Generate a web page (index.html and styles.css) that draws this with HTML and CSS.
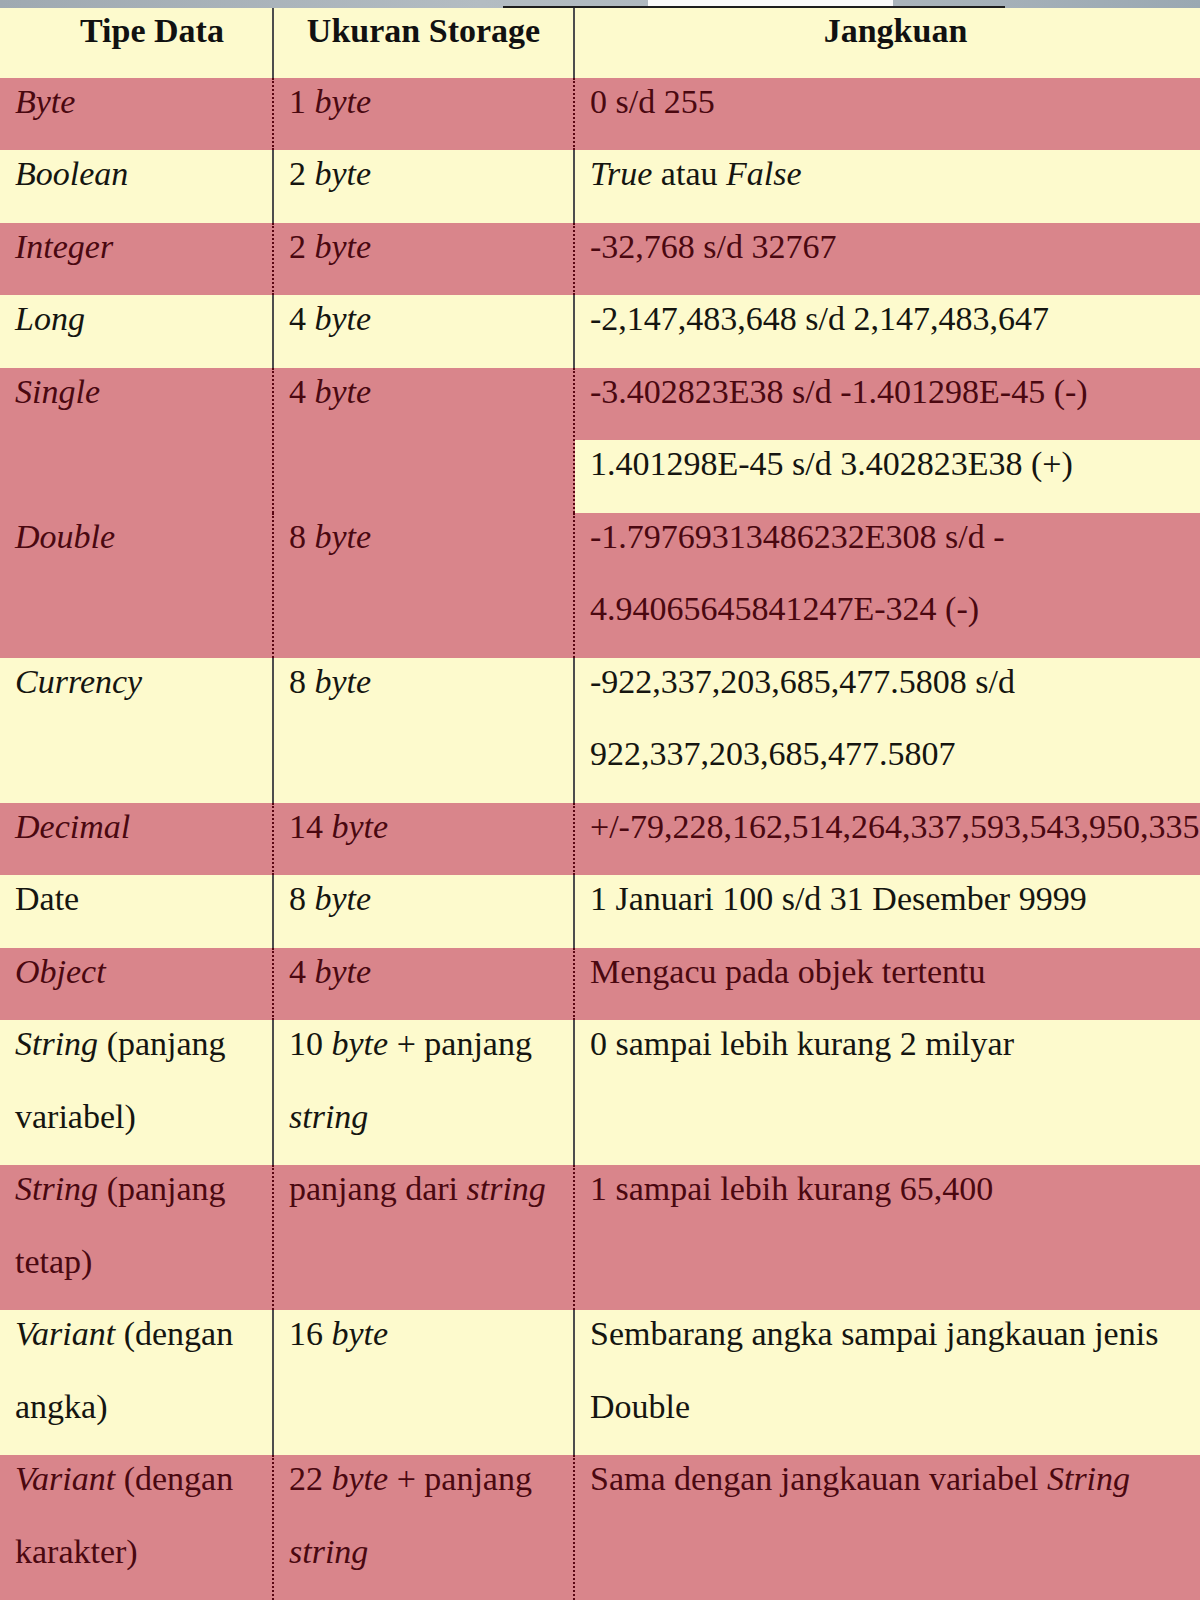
FILE: index.html
```html
<!DOCTYPE html>
<html lang="id">
<head>
<meta charset="utf-8">
<title>Tipe Data</title>
<link rel="stylesheet" href="styles.css">
</head>
<body>
<div class="strip">
  <div class="strip-bar"><div class="strip-box"></div></div>
</div>
<table class="dt">
  <colgroup>
    <col class="c1">
    <col class="c2">
    <col class="c3">
  </colgroup>
  <thead>
    <tr class="hd">
      <th class="h1"><div class="t">Tipe Data</div></th>
      <th class="h2"><div class="t">Ukuran Storage</div></th>
      <th class="h3"><div class="t">Jangkuan</div></th>
    </tr>
  </thead>
  <tbody>
    <tr class="p">
      <td><div class="t"><i>Byte</i></div></td>
      <td><div class="t">1 <i>byte</i></div></td>
      <td><div class="t">0 s/d 255</div></td>
    </tr>
    <tr class="y">
      <td><div class="t"><i>Boolean</i></div></td>
      <td><div class="t">2 <i>byte</i></div></td>
      <td><div class="t"><i>True</i> atau <i>False</i></div></td>
    </tr>
    <tr class="p">
      <td><div class="t"><i>Integer</i></div></td>
      <td><div class="t">2 <i>byte</i></div></td>
      <td><div class="t">-32,768 s/d 32767</div></td>
    </tr>
    <tr class="y">
      <td><div class="t"><i>Long</i></div></td>
      <td><div class="t">4 <i>byte</i></div></td>
      <td><div class="t">-2,147,483,648 s/d 2,147,483,647</div></td>
    </tr>
    <tr class="p">
      <td rowspan="2"><div class="t"><i>Single</i></div></td>
      <td rowspan="2"><div class="t">4 <i>byte</i></div></td>
      <td><div class="t">-3.402823E38 s/d -1.401298E-45 (-)</div></td>
    </tr>
    <tr class="y">
      <td><div class="t">1.401298E-45 s/d 3.402823E38 (+)</div></td>
    </tr>
    <tr class="p">
      <td><div class="t"><i>Double</i></div></td>
      <td><div class="t">8 <i>byte</i></div></td>
      <td><div class="t">-1.79769313486232E308 s/d -<br>4.94065645841247E-324 (-)</div></td>
    </tr>
    <tr class="y">
      <td><div class="t"><i>Currency</i></div></td>
      <td><div class="t">8 <i>byte</i></div></td>
      <td><div class="t">-922,337,203,685,477.5808 s/d<br>922,337,203,685,477.5807</div></td>
    </tr>
    <tr class="p">
      <td><div class="t"><i>Decimal</i></div></td>
      <td><div class="t">14 <i>byte</i></div></td>
      <td class="nw"><div class="t">+/-79,228,162,514,264,337,593,543,950,335</div></td>
    </tr>
    <tr class="y">
      <td><div class="t">Date</div></td>
      <td><div class="t">8 <i>byte</i></div></td>
      <td><div class="t">1 Januari 100 s/d 31 Desember 9999</div></td>
    </tr>
    <tr class="p">
      <td><div class="t"><i>Object</i></div></td>
      <td><div class="t">4 <i>byte</i></div></td>
      <td><div class="t">Mengacu pada objek tertentu</div></td>
    </tr>
    <tr class="y">
      <td><div class="t"><i>String</i> (panjang<br>variabel)</div></td>
      <td><div class="t">10 <i>byte</i> + panjang<br><i>string</i></div></td>
      <td><div class="t">0 sampai lebih kurang 2 milyar</div></td>
    </tr>
    <tr class="p">
      <td><div class="t"><i>String</i> (panjang<br>tetap)</div></td>
      <td><div class="t">panjang dari <i>string</i></div></td>
      <td><div class="t">1 sampai lebih kurang 65,400</div></td>
    </tr>
    <tr class="y">
      <td><div class="t"><i>Variant</i> (dengan<br>angka)</div></td>
      <td><div class="t">16 <i>byte</i></div></td>
      <td><div class="t">Sembarang angka sampai jangkauan jenis<br>Double</div></td>
    </tr>
    <tr class="p">
      <td><div class="t"><i>Variant</i> (dengan<br>karakter)</div></td>
      <td><div class="t">22 <i>byte</i> + panjang<br><i>string</i></div></td>
      <td><div class="t">Sama dengan jangkauan variabel <i>String</i></div></td>
    </tr>
  </tbody>
</table>
</body>
</html>
```
FILE: styles.css
```css
html, body {
  margin: 0;
  padding: 0;
}
body {
  width: 1200px;
  overflow: hidden;
  background: #fdfacd;
  font-family: "Liberation Serif", "Times New Roman", serif;
  font-size: 34px;
  color: #111;
}
.strip {
  height: 8px;
  background: linear-gradient(90deg, #9fa9b1 0%, #b3bcc2 40%, #aab4bb 75%, #9aa8b2 100%);
  display: flex;
}
.strip-bar {
  margin-left: 503px;
  width: 502px;
  height: 6px;
  border-bottom: 2px solid #1e1e1e;
  display: flex;
}
.strip-box {
  margin-left: 145px;
  width: 245px;
  height: 6px;
  background: #fafafa;
}
.dt {
  width: 1200px;
  table-layout: fixed;
  border-collapse: separate;
  border-spacing: 0;
}
.c1 { width: 274px; }
.c2 { width: 301px; }
.c3 { width: 625px; }
.dt th, .dt td {
  padding: 0 14px 12px 15px;
  vertical-align: top;
  text-align: left;
  line-height: 72.5px;
}
.t {
  margin-top: -12px;
}
.dt th {
  font-weight: bold;
  text-align: center;
  line-height: 69.6px;
  padding-bottom: 12px;
  background: #fdfacd;
}
.dt th.h1 { padding-left: 32px; padding-right: 0; border-right: 2px solid #4d4d4d; }
.dt th.h2 { padding-left: 0; padding-right: 0; border-right: 2px solid #4d4d4d; }
.dt th.h3 { padding-left: 16px; padding-right: 0; }
.dt td:not(:last-child) {
  border-right: 2px solid #4d4d4d;
}
.dt tr.y td {
  background: #fdfacd;
  color: #151510;
}
.dt tr.p td {
  background: #d9858b;
  color: #4a0810;
}
.dt tr.p td:not(:last-child) {
  border-right: 2px dotted #5a0612;
}
.dt td.nw {
  white-space: nowrap;
}
.dt i { font-style: italic; }
```
